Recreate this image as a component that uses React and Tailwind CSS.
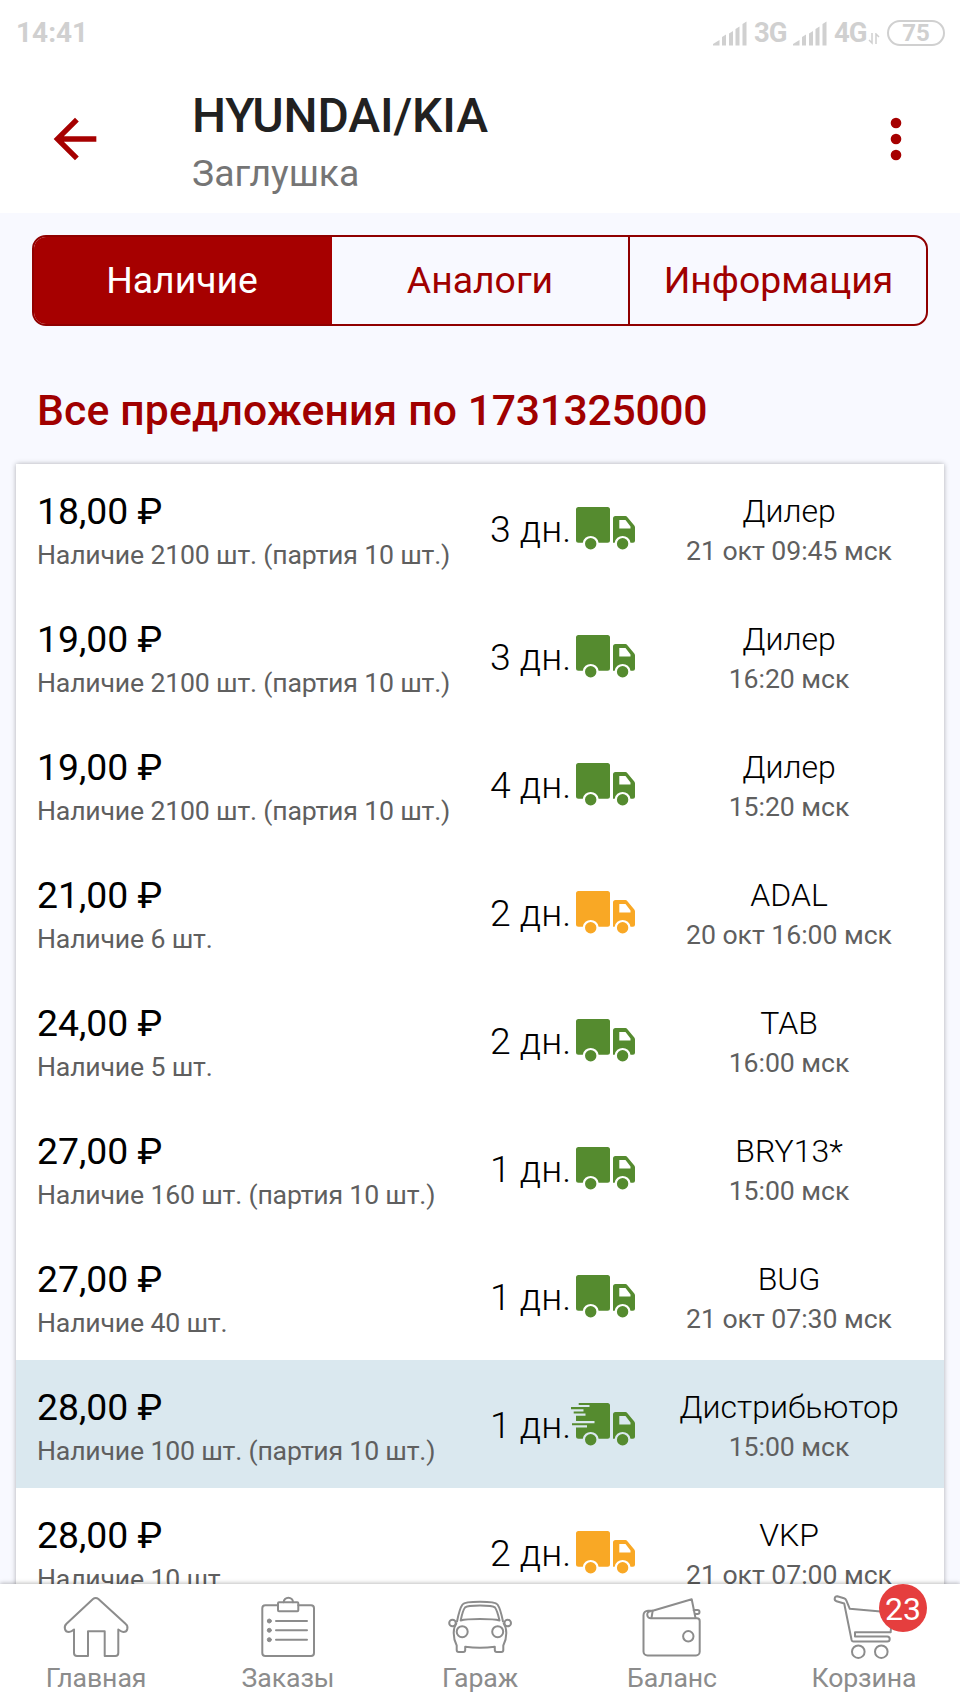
import React from 'react';

const offers = [
  { price: '18,00', stock: 'Наличие 2100 шт. (партия 10 шт.)', days: 3, seller: 'Дилер', time: '21 окт 09:45 мск', color: 'text-[#558b2f]' },
  { price: '19,00', stock: 'Наличие 2100 шт. (партия 10 шт.)', days: 3, seller: 'Дилер', time: '16:20 мск', color: 'text-[#558b2f]' },
  { price: '19,00', stock: 'Наличие 2100 шт. (партия 10 шт.)', days: 4, seller: 'Дилер', time: '15:20 мск', color: 'text-[#558b2f]' },
  { price: '21,00', stock: 'Наличие 6 шт.', days: 2, seller: 'ADAL', time: '20 окт 16:00 мск', color: 'text-[#f9a825]' },
  { price: '24,00', stock: 'Наличие 5 шт.', days: 2, seller: 'TAB', time: '16:00 мск', color: 'text-[#558b2f]' },
  { price: '27,00', stock: 'Наличие 160 шт. (партия 10 шт.)', days: 1, seller: 'BRY13*', time: '15:00 мск', color: 'text-[#558b2f]' },
  { price: '27,00', stock: 'Наличие 40 шт.', days: 1, seller: 'BUG', time: '21 окт 07:30 мск', color: 'text-[#558b2f]' },
  { price: '28,00', stock: 'Наличие 100 шт. (партия 10 шт.)', days: 1, seller: 'Дистрибьютор', time: '15:00 мск', color: 'text-[#558b2f]', fast: true },
  { price: '28,00', stock: 'Наличие 10 шт.', days: 2, seller: 'VKP', time: '21 окт 07:00 мск', color: 'text-[#f9a825]' },
];

function Signal() {
  return (
    <svg className="w-[34px] h-[25px]" viewBox="0 0 34 25" fill="currentColor">
      <path d="M0 24.5V23l6.5-4v5.500z" />
      <path d="M9 16l4-2.500v11H9zM16 12.500l4-2.500v14.500h-4zM22.500 8l4-2.500v19h-4zM29.500 3l4-2.500v24h-4z" />
    </svg>
  );
}

function StatusBar() {
  return (
    <div className="h-16 pt-[2px] flex items-center justify-between pl-4 pr-[15px] text-[#d0d0d0] font-bold text-[28px] leading-8">
      <span>14:41</span>
      <div className="flex items-center">
        <Signal />
        <span className="ml-[7px] w-[33px] text-[27.500px] tracking-[-1px]">3G</span>
        <span className="w-[6px]" />
        <Signal />
        <span className="ml-[7px] w-[33px] text-[27.500px] tracking-[-1px]">4G</span>
        <svg className="w-[12px] h-[12px] mt-3 ml-px" viewBox="0 0 12 12" fill="none" stroke="currentColor" strokeWidth="1.500">
          <path d="M4 0v10L1 7M8 11V1l3 3" />
        </svg>
        <span className="ml-[7px] w-[58px] h-[26px] -mt-px rounded-full border-2 border-current flex items-center justify-center text-[24px] leading-6">75</span>
      </div>
    </div>
  );
}

function Header() {
  return (
    <header className="h-[149px] flex">
      <svg className="w-16 h-16 ml-[43px] mt-[43px] text-[#a60000]" viewBox="0 0 24 24" fill="currentColor">
        <path d="M20 11H7.830l5.590-5.590L12 4l-8 8 8 8 1.410-1.410L7.830 13H20z" />
      </svg>
      <div className="ml-[85px] pt-6 flex-1">
        <h1 className="text-[48px] leading-[56px] tracking-[-0.1px] font-medium text-[#212121]">HYUNDAI/KIA</h1>
        <p className="mt-[7px] text-[37.33px] leading-[44px] text-[#757575]">Заглушка</p>
      </div>
      <svg className="w-16 h-16 mr-8 mt-[43px] text-[#a60000]" viewBox="0 0 24 24" fill="currentColor">
        <circle cx="12" cy="6" r="2" />
        <circle cx="12" cy="12" r="2" />
        <circle cx="12" cy="18" r="2" />
      </svg>
    </header>
  );
}

function Tabs() {
  return (
    <div className="mx-8 mt-[22px] h-[91px] grid grid-cols-[298px_298px_1fr] rounded-[14px] border-2 border-[#900000] bg-clip-border overflow-hidden text-[37.33px] leading-[44px] text-[#a00000]">
      <div className="bg-[#a60000] text-white flex items-center justify-center pb-[2px] pr-[2px]">Наличие</div>
      <div className="border-r-2 border-[#900000] flex items-center justify-center pb-[2px]">Аналоги</div>
      <div className="flex items-center justify-center pb-[2px] pl-px">Информация</div>
    </div>
  );
}

function Truck({ color, fast }) {
  return (
    <svg className={`w-[66px] h-[46px] shrink-0 ${color}`} viewBox="0 0 66 46" fill="currentColor">
      {fast ? (
        <path d="M8.700 2H37.500a2.500 2.500 0 0 1 2.500 2.500V35.200a2.500 2.500 0 0 1-2.500 2.500H28.600A8 8 0 0 0 12.800 37.700H8.500A2.500 2.500 0 0 1 6 35.200V26.500H17V24.300H2V22.200H24.500V20H6V14.700H15.500V12.500H3.700V10.400H13.500V8.200H1V6H19.500V4H8.700z" />
      ) : (
        <path d="M8.500 2H37.500a2.500 2.500 0 0 1 2.500 2.500V35.200a2.500 2.500 0 0 1-2.500 2.500H28.600A8 8 0 0 0 12.800 37.700H8.500A2.500 2.500 0 0 1 6 35.200V4.500A2.500 2.500 0 0 1 8.500 2z" />
      )}
      <path fillRule="evenodd" d="M45.500 11H55.500Q56.500 11 57.200 12L64.300 20.500Q65 21.300 65 22.500V35.700a2 2 0 0 1-2 2H60.500A8 8 0 0 0 44.700 37.700H43V13.500A2.500 2.500 0 0 1 45.500 11zM49.300 15V23.500H60.500V21.500L55.500 15z" />
      <circle cx="20.700" cy="38.700" r="5.700" />
      <circle cx="52.600" cy="38.700" r="5.700" />
    </svg>
  );
}

function OfferRow({ offer }) {
  return (
    <div className={`h-32 shrink-0 flex ${offer.fast ? 'bg-[#dae8ef]' : 'bg-white'}`}>
      <div className="w-[472px] pl-[21px] pt-[25px] whitespace-nowrap">
        <div className="text-[37.33px] leading-[44px] text-black">{offer.price} ₽</div>
        <div className="mt-[6px] text-[26.67px] leading-8 tracking-[-0.19px] text-[#5f5f5f]">{offer.stock}</div>
      </div>
      <div className="w-[152px] pt-[41px] flex items-start">
        <span className="w-[82px] pt-[2px] pl-[2px] text-[37.33px] leading-[44px] font-light text-black whitespace-nowrap">{offer.days} дн.</span>
        <Truck color={offer.color} fast={offer.fast} />
      </div>
      <div className="w-[298px] pt-[28px] text-center whitespace-nowrap">
        <div className="text-[32px] leading-[38px] font-light text-black">{offer.seller}</div>
        <div className="mt-[5px] text-[26.67px] leading-8 tracking-[-0.05px] text-[#5f5f5f]">{offer.time}</div>
      </div>
    </div>
  );
}

const icons = {
  home: (
    <path d="M31.700 3q-1.500 0-2.700 1L2.500 28.800C-.5 31.500.5 37 5 37c2 0 3.200-1 5-2.500V58q0 3 3 3h11V36.300h16.700V61h10.600q3 0 3-3V34.500c2 1.500 3 2.500 5 2.500 4.500 0 5.500-5.500 2.200-8.200L34.400 4q-1.200-1-2.700-1z" />
  ),
  orders: (
    <>
      <path d="M22 10.300H9.300a3 3 0 0 0-3 3V58a3 3 0 0 0 3 3H55a3 3 0 0 0 3-3V13.300a3 3 0 0 0-3-3H42.300" />
      <rect x="22" y="7.300" width="20.300" height="9" rx="1" />
      <path d="M27.700 7.300a4.600 4.600 0 0 1 9.300 0M20 26h31M20 35.300h31M20 44.700h31" />
      <g fill="currentColor" strokeWidth="1">
        <circle cx="13.300" cy="26" r="2" />
        <circle cx="13.300" cy="35.300" r="2" />
        <circle cx="13.300" cy="44.700" r="2" />
      </g>
    </>
  ),
  garage: (
    <>
      <path d="M9 26.500C10.500 19 12 13 14.500 9.500 16 7.500 24 6.700 32 6.700s16 .8 17.500 2.800C52 13 53.500 19 55 26.500" />
      <path d="M12.700 25.500C14 19 15 15 17 12.500 18.500 11 25 10.500 32 10.500s13.500.5 15 2c2 2.500 3 6.500 4.500 13C45 23.500 19 23.500 12.700 25.500z" />
      <circle cx="4.500" cy="28" r="3.300" />
      <circle cx="59.700" cy="28" r="3.300" />
      <path d="M8.300 28.500C5 33 4.500 42 8.700 50.500V55a2 2 0 0 0 2 2h4.500a2 2 0 0 0 2-2v-3.200Q32 53.500 46.800 51.800V55a2 2 0 0 0 2 2h4.500a2 2 0 0 0 2-2v-4.500C59.500 42 59 33 55.700 28.500" />
      <circle cx="14.200" cy="36.700" r="5.500" />
      <circle cx="49.700" cy="36.700" r="5.500" />
    </>
  ),
  balance: (
    <>
      <path d="M12.700 15.700H8a4.500 4.500 0 0 0-4.500 4.500V56.500a4 4 0 0 0 4 4H56a3.700 3.700 0 0 0 3.700-3.700V26a2.700 2.700 0 0 0-2.700-2.700H11a3.500 3.500 0 0 1-.5-7" />
      <path d="M11.500 23L12.700 15.700 51.700 4.300 55.500 23M53.500 15h4a2 2 0 0 1 0 4h-2.500" />
      <circle cx="48.300" cy="41.300" r="5.200" />
    </>
  ),
  cart: (
    <>
      <path d="M5.300 1.300L12 3.300Q13.700 3.800 14.300 5.300L17.800 13.800 60 17.500 58.700 37.300H23v4.300H55.200a2.500 2.500 0 0 1 0 5H21.500Q20 46.600 19.600 45L12.200 8.500 4.500 6.200A2.500 2.500 0 0 1 5.300 1.300z" />
      <circle cx="26.300" cy="56.700" r="6.300" />
      <circle cx="49.300" cy="56.700" r="6.300" />
    </>
  ),
};

const navItems = [
  { id: 'home', label: 'Главная' },
  { id: 'orders', label: 'Заказы' },
  { id: 'garage', label: 'Гараж' },
  { id: 'balance', label: 'Баланс' },
  { id: 'cart', label: 'Корзина', badge: 23 },
];

function BottomNav() {
  return (
    <nav className="relative h-[123px] shrink-0 grid grid-cols-5 bg-white text-[#8c8c8c] shadow-[0_-1px_4px_rgba(0,0,0,0.25)]">
      {navItems.map((item) => (
        <div key={item.id} className="relative flex flex-col items-center pt-[11px]">
          <svg className="w-16 h-16 overflow-visible" viewBox="0 0 64 64" fill="none" stroke="currentColor" strokeWidth="2" strokeLinejoin="round" strokeLinecap="round">
            {icons[item.id]}
          </svg>
          <span className="mt-[3px] text-[26.67px] leading-8 tracking-[-0.1px]">{item.label}</span>
          {item.badge && (
            <span className="absolute left-[111px] top-0 w-12 h-12 rounded-full bg-[#e53e3e] text-white text-[32px] leading-[50px] text-center">
              {item.badge}
            </span>
          )}
        </div>
      ))}
    </nav>
  );
}

export default function App() {
  return (
    <div className="w-[960px] h-[1707px] flex flex-col overflow-hidden bg-[#f8f9ff] font-['Roboto',sans-serif]">
      <div className="bg-white shrink-0">
        <StatusBar />
        <Header />
      </div>
      <main className="flex-1 min-h-0 overflow-hidden">
        <Tabs />
        <h2 className="mt-[59px] ml-[37px] text-[42.67px] leading-[50px] font-medium text-[#a00000]">
          <span className="tracking-[0.16px]">Все предложения по </span>
          <span className="tracking-[-0.3px]">1731325000</span>
        </h2>
        <div className="mx-4 mt-[29px] flex flex-col bg-white shadow-[0_0_5px_rgba(0,0,0,0.3)]">
          {offers.map((offer, i) => (
            <OfferRow key={i} offer={offer} />
          ))}
        </div>
      </main>
      <BottomNav />
    </div>
  );
}
